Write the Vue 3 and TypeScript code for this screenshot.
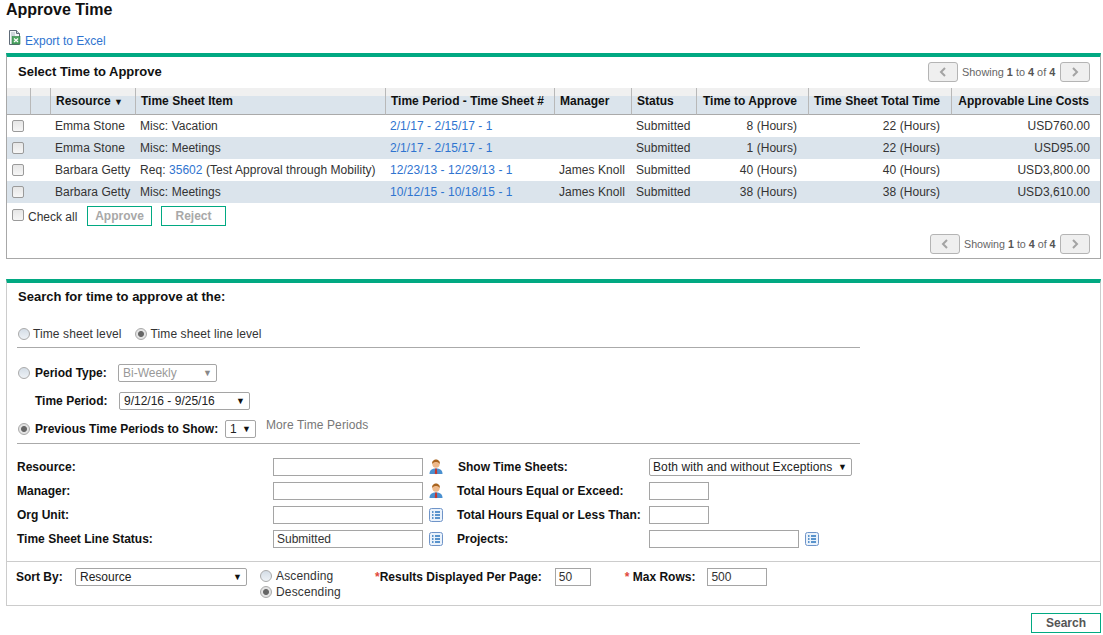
<script setup lang="ts">
interface Row {
  resource: string
  item: string
  reqId?: string
  itemRest?: string
  period: string
  manager: string
  status: string
  toApprove: string
  total: string
  cost: string
}

const rows: Row[] = [
  { resource: "Emma Stone", item: "Misc: Vacation", period: "2/1/17 - 2/15/17 - 1", manager: "", status: "Submitted", toApprove: "8 (Hours)", total: "22 (Hours)", cost: "USD760.00" },
  { resource: "Emma Stone", item: "Misc: Meetings", period: "2/1/17 - 2/15/17 - 1", manager: "", status: "Submitted", toApprove: "1 (Hours)", total: "22 (Hours)", cost: "USD95.00" },
  { resource: "Barbara Getty", item: "Req: ", reqId: "35602", itemRest: " (Test Approval through Mobility)", period: "12/23/13 - 12/29/13 - 1", manager: "James Knoll", status: "Submitted", toApprove: "40 (Hours)", total: "40 (Hours)", cost: "USD3,800.00" },
  { resource: "Barbara Getty", item: "Misc: Meetings", period: "10/12/15 - 10/18/15 - 1", manager: "James Knoll", status: "Submitted", toApprove: "38 (Hours)", total: "38 (Hours)", cost: "USD3,610.00" },
]
</script>

<template>
  <div class="page">
    <h1 class="title">Approve Time</h1>
    <div class="export">
      <svg class="xls" width="13" height="15" viewBox="0 0 13 15">
        <path d="M1.500 .5h7l3 3v11h-10z" fill="#f4f7fa" stroke="#5f6b78" />
        <path d="M8.500 .5v3h3" fill="#cfd8e2" stroke="#5f6b78" />
        <path d="M3 3h4M3 5h4" stroke="#a9b4bf" />
        <rect x="4" y="6.500" width="8" height="7.500" fill="#4fa564" stroke="#2f7d45" stroke-width=".6" />
        <path d="M6 8.500l4 3.500M10 8.500l-4 3.500" stroke="#fff" stroke-width="1.200" />
      </svg>
      <a class="link">Export to Excel</a>
    </div>

    <section class="panel approve">
      <div class="panel-head">
        <h2>Select Time to Approve</h2>
        <div class="pager">
          <button class="pg"><svg width="8" height="10" viewBox="0 0 8 10"><path d="M6 1L2 5l4 4" fill="none" stroke="#a3a3a3" stroke-width="2" /></svg></button>
          <span>Showing <b>1</b> to <b>4</b> of <b>4</b></span>
          <button class="pg"><svg width="8" height="10" viewBox="0 0 8 10"><path d="M2 1l4 4-4 4" fill="none" stroke="#a3a3a3" stroke-width="2" /></svg></button>
        </div>
      </div>

      <table class="grid">
        <colgroup>
          <col style="width: 23px" />
          <col style="width: 20px" />
          <col style="width: 85px" />
          <col style="width: 250px" />
          <col style="width: 169px" />
          <col style="width: 77px" />
          <col style="width: 65px" />
          <col style="width: 112px" />
          <col style="width: 143px" />
          <col />
        </colgroup>
        <thead>
          <tr>
            <th></th>
            <th></th>
            <th>Resource <span class="sort">▼</span></th>
            <th>Time Sheet Item</th>
            <th>Time Period - Time Sheet #</th>
            <th>Manager</th>
            <th>Status</th>
            <th class="num">Time to Approve</th>
            <th class="num">Time Sheet Total Time</th>
            <th class="num">Approvable Line Costs</th>
          </tr>
        </thead>
        <tbody>
          <tr v-for="(r, i) in rows" :key="i" :class="{ alt: i % 2 === 1 }">
            <td class="chk"><span class="checkbox"></span></td>
            <td></td>
            <td>{{ r.resource }}</td>
            <td>{{ r.item }}<a v-if="r.reqId" class="link">{{ r.reqId }}</a>{{ r.itemRest }}</td>
            <td><a class="link">{{ r.period }}</a></td>
            <td>{{ r.manager }}</td>
            <td>{{ r.status }}</td>
            <td class="num">{{ r.toApprove }}</td>
            <td class="num">{{ r.total }}</td>
            <td class="num last">{{ r.cost }}</td>
          </tr>
        </tbody>
      </table>

      <div class="actions">
        <span class="checkbox"></span>
        <span class="check-label">Check all</span>
        <button class="btn">Approve</button>
        <button class="btn">Reject</button>
      </div>
      <div class="pager bottom">
        <button class="pg"><svg width="8" height="10" viewBox="0 0 8 10"><path d="M6 1L2 5l4 4" fill="none" stroke="#a3a3a3" stroke-width="2" /></svg></button>
        <span>Showing <b>1</b> to <b>4</b> of <b>4</b></span>
        <button class="pg"><svg width="8" height="10" viewBox="0 0 8 10"><path d="M2 1l4 4-4 4" fill="none" stroke="#a3a3a3" stroke-width="2" /></svg></button>
      </div>
    </section>

    <section class="panel search">
      <h2 class="search-title">Search for time to approve at the:</h2>

      <div class="narrow">
        <div class="levels">
          <span class="radio"></span><span class="lvl">Time sheet level</span>
          <span class="radio on"></span><span>Time sheet line level</span>
        </div>

        <div class="periods">
          <div class="p-row p1">
            <span class="radio"></span>
            <label class="w84">Period Type:</label>
            <span class="select disabled s1">Bi-Weekly<i>▼</i></span>
          </div>
          <div class="p-row p2">
            <label class="tp">Time Period:</label>
            <span class="select s2">9/12/16 - 9/25/16<i>▼</i></span>
          </div>
          <div class="p-row p3">
            <span class="radio on"></span>
            <label class="prev">Previous Time Periods to Show:</label>
            <span class="select s3">1<i>▼</i></span>
            <span class="more">More Time Periods</span>
          </div>
        </div>

        <div class="fields">
          <label>Resource:</label>
          <span class="inp w150"></span>
          <svg class="ic" width="14" height="16" viewBox="0 0 14 16">
            <path d="M.5 15c0-4 2.500-5.500 6.500-5.500s6.500 1.500 6.500 5.500z" fill="#4a90d0" />
            <path d="M6.200 9.500h1.600l.5 5-1.300 .8-1.300-.8z" fill="#c8352b" />
            <circle cx="7" cy="5" r="3.700" fill="#eeb98a" />
            <path d="M3.200 5c-.5-3 1.800-4.500 3.800-4.500s4.300 1.500 3.800 4.500c-1-1.500-2.300-2-3.800-2s-2.800.5-3.800 2z" fill="#a8641f" />
          </svg>
          <label class="r first">Show Time Sheets:</label>
          <span class="select s4">Both with and without Exceptions<i>▼</i></span>

          <label>Manager:</label>
          <span class="inp w150"></span>
          <svg class="ic" width="14" height="16" viewBox="0 0 14 16">
            <path d="M.5 15c0-4 2.500-5.500 6.500-5.500s6.500 1.500 6.500 5.500z" fill="#4a90d0" />
            <path d="M6.200 9.500h1.600l.5 5-1.300 .8-1.300-.8z" fill="#c8352b" />
            <circle cx="7" cy="5" r="3.700" fill="#eeb98a" />
            <path d="M3.200 5c-.5-3 1.800-4.500 3.800-4.500s4.300 1.500 3.800 4.500c-1-1.500-2.300-2-3.800-2s-2.800.5-3.800 2z" fill="#a8641f" />
          </svg>
          <label class="r">Total Hours Equal or Exceed:</label>
          <span class="inp w60"></span>

          <label>Org Unit:</label>
          <span class="inp w150"></span>
          <svg class="ic" width="14" height="14" viewBox="0 0 14 14">
            <rect x=".5" y=".5" width="13" height="13" rx="2" fill="#eaf2fb" stroke="#6f94c8" />
            <path d="M3 4h1.500M3 7h1.500M3 10h1.500M6 4h5M6 7h5M6 10h5" stroke="#2a74bd" stroke-width="1.600" />
          </svg>
          <label class="r">Total Hours Equal or Less Than:</label>
          <span class="inp w60"></span>

          <label>Time Sheet Line Status:</label>
          <span class="inp w150">Submitted</span>
          <svg class="ic" width="14" height="14" viewBox="0 0 14 14">
            <rect x=".5" y=".5" width="13" height="13" rx="2" fill="#eaf2fb" stroke="#6f94c8" />
            <path d="M3 4h1.500M3 7h1.500M3 10h1.500M6 4h5M6 7h5M6 10h5" stroke="#2a74bd" stroke-width="1.600" />
          </svg>
          <label class="r">Projects:</label>
          <div class="pair">
            <span class="inp w150"></span>
            <svg width="14" height="14" viewBox="0 0 14 14">
              <rect x=".5" y=".5" width="13" height="13" rx="2" fill="#eaf2fb" stroke="#6f94c8" />
              <path d="M3 4h1.500M3 7h1.500M3 10h1.500M6 4h5M6 7h5M6 10h5" stroke="#2a74bd" stroke-width="1.600" />
            </svg>
          </div>
        </div>
      </div>

      <div class="sort-row">
        <label class="sort-label">Sort By:</label>
        <span class="select s5">Resource<i>▼</i></span>
        <div class="order">
          <div><span class="radio"></span>Ascending</div>
          <div><span class="radio on"></span>Descending</div>
        </div>
        <label class="per-page"><em>*</em>Results Displayed Per Page:</label>
        <span class="inp w36">50</span>
        <label class="max"><em>*</em> Max Rows:</label>
        <span class="inp w60">500</span>
      </div>
    </section>

    <div class="foot">
      <button class="btn search-btn">Search</button>
    </div>
  </div>
</template>

<style>
html,
body {
  margin: 0;
  background: #fff;
}
</style>

<style scoped>
.page {
  width: 1103px;
  height: 635px;
  overflow: hidden;
  box-sizing: border-box;
  padding: 0 2px 0 6px;
  font-family: "Liberation Sans", Arial, sans-serif;
  font-size: 12px;
  color: #333;
}

.title {
  margin: 0;
  font-size: 16px;
  line-height: 19px;
  font-weight: bold;
  color: #111;
}

.export {
  display: flex;
  align-items: flex-start;
  height: 30px;
  gap: 4px;
  padding: 11px 0 0 2px;
  box-sizing: border-box;
  line-height: 15px;
}

.export .link {
  margin-top: 4px;
}

.link {
  color: #2f74d0;
}

.panel {
  border: 1px solid #a8a8a8;
  border-top: 4px solid #01a982;
  margin-top: 4px;
  box-sizing: border-box;
}

.approve {
  height: 206px;
}

.panel-head {
  display: flex;
  justify-content: space-between;
  align-items: center;
  height: 31px;
  box-sizing: border-box;
  padding: 0 10px 2px 11px;
}

h2 {
  margin: 0;
  font-size: 13px;
  font-weight: bold;
  color: #111;
}

.pager {
  display: flex;
  align-items: center;
  gap: 4px;
  color: #666;
  font-size: 10.900px;
}

.pager span {
  width: 93px;
  margin-right: 1px;
  white-space: nowrap;
}

.pager b {
  color: #555;
}

.pager.bottom {
  justify-content: flex-end;
  padding: 7px 10px 0 0;
  font-size: 10.700px;
}

.pager.bottom span {
  width: 91px;
}

.pg {
  width: 30px;
  height: 20px;
  padding: 0;
  display: flex;
  align-items: center;
  justify-content: center;
  background: #efefef;
  border: 1px solid #b4b4b4;
  border-radius: 3px;
}

.grid {
  width: 1093px;
  border-collapse: separate;
  border-spacing: 0;
  table-layout: fixed;
}

.grid th {
  height: 27px;
  padding: 0 0 0 5px;
  box-sizing: border-box;
  text-align: left;
  font-size: 12px;
  color: #111;
  background: linear-gradient(#f0f0f0 0 8px, #dbe4ec 8px);
  border-left: 1px solid #b8b8b8;
  border-bottom: 1px solid #aaa;
  white-space: nowrap;
}

.grid th:first-child {
  border-left: none;
}

.grid th.num,
.grid td.num {
  text-align: right;
  padding-right: 11px;
}

.grid td.num.last {
  padding-right: 10px;
}

.sort {
  font-size: 9px;
}

.grid td {
  height: 22px;
  padding: 0 0 0 5px;
  box-sizing: border-box;
  white-space: nowrap;
  letter-spacing: 0.05px;
}

tr.alt td {
  background: #dbe4ec;
}

.checkbox {
  display: block;
  width: 10px;
  height: 10px;
  border: 1px solid #9a9a9a;
  border-radius: 2px;
  background: linear-gradient(#e6e6e6, #f6f6f6);
}

.actions {
  display: flex;
  align-items: center;
  height: 24px;
  box-sizing: border-box;
  padding: 2px 0 0 5px;
}

.actions .checkbox {
  margin-top: -3px;
}

.check-label {
  width: 50px;
  margin: 2px 9px 0 4px;
}

.btn {
  width: 65px;
  height: 20px;
  padding: 0;
  margin-right: 9px;
  background: #fff;
  border: 1px solid #01a982;
  font-family: inherit;
  font-size: 12px;
  font-weight: bold;
  color: #a8a8a8;
}

.search {
  height: 327px;
  margin-top: 20px;
  border-color: #ccc;
  border-top-color: #01a982;
}

.search-title {
  padding: 7px 0 0 11px;
  line-height: 14px;
}

.narrow {
  width: 853px;
  padding-left: 10px;
  box-sizing: border-box;
}

.levels {
  display: flex;
  align-items: center;
  height: 38px;
  margin-top: 6px;
  padding: 19px 0 9px;
  box-sizing: border-box;
  border-bottom: 1px solid #aaa;
  letter-spacing: 0.1px;
}

.lvl {
  margin-right: 12px;
}

.levels .radio.on {
  margin-right: 4px;
}

.radio {
  display: inline-block;
  flex: none;
  box-sizing: border-box;
  width: 12px;
  height: 12px;
  margin: 0 3px 0 1px;
  border: 1px solid #aaa;
  border-radius: 50%;
  background: linear-gradient(#d4dde6, #eef2f6);
}

.radio.on {
  background: radial-gradient(circle, #666 0 2.500px, #e3e3e3 3.500px);
}

.periods {
  height: 96px;
  box-sizing: border-box;
  border-bottom: 1px solid #aaa;
  color: #111;
}

.p-row {
  display: flex;
  align-items: center;
}

.p1 {
  padding-top: 15px;
  height: 19px;
}

.p2 {
  padding-top: 9px;
  height: 19px;
}

.p3 {
  padding-top: 9px;
  height: 19px;
}

label {
  font-weight: bold;
  color: #111;
  white-space: nowrap;
}

.w84 {
  margin-left: 2px;
  width: 83px;
}

.tp {
  margin-left: 18px;
  width: 84px;
}

.prev {
  margin-left: 2px;
  margin-right: 9px;
  width: 181px;
}

.select {
  display: inline-flex;
  justify-content: space-between;
  align-items: center;
  box-sizing: border-box;
  height: 18px;
  padding: 0 4px;
  background: #fff;
  border: 1px solid #a5a5a5;
  border-radius: 2px;
  color: #222;
  white-space: nowrap;
}

.select i {
  font-style: normal;
  font-size: 9px;
  color: #111;
}

.select.disabled {
  color: #999;
}

.select.disabled i {
  color: #888;
}

.s1 {
  width: 99px;
}

.s2 {
  width: 131px;
}

.s3 {
  width: 31px;
}

.s4 {
  width: 203px;
  padding-left: 3px;
  letter-spacing: 0.1px;
}

.s5 {
  width: 172px;
}

.more {
  margin: -8px 0 0 10px;
  color: #777;
  letter-spacing: 0.1px;
}

.fields {
  display: grid;
  grid-template-columns: 256px 150px 34px 192px 1fr;
  grid-auto-rows: 24px;
  align-items: center;
  margin-top: 11px;
}

.fields .ic {
  margin-left: 6px;
}

.r.first {
  margin-left: 1px;
}

.pair {
  display: flex;
  align-items: center;
  gap: 6px;
}

.inp {
  display: block;
  flex: none;
  box-sizing: border-box;
  height: 18px;
  line-height: 16px;
  padding-left: 3px;
  border: 1px solid #a5a5a5;
  color: #333;
  background: #fff;
}

.w150 {
  width: 150px;
}

.w60 {
  width: 60px;
}

.w36 {
  width: 36px;
}

.sort-row {
  display: flex;
  align-items: flex-start;
  margin-top: 10px;
  padding: 6px 0 0 9px;
  border-top: 1px solid #ccc;
  height: 38px;
  box-sizing: border-box;
}

.sort-row label {
  line-height: 18px;
}

.sort-label {
  width: 59px;
}

.order {
  margin-left: 12px;
  width: 116px;
  line-height: 16px;
  letter-spacing: 0.15px;
}

.order > div {
  display: flex;
  align-items: center;
}

.order .radio {
  margin-right: 4px;
}

em {
  font-style: normal;
  color: #e0483a;
}

.per-page {
  margin-right: 13px;
}

.max {
  margin: 0 12px 0 34px;
}

.foot {
  display: flex;
  justify-content: flex-end;
  margin-top: 7px;
}

.search-btn {
  width: 70px;
  margin-right: 0;
  color: #555;
}
</style>
